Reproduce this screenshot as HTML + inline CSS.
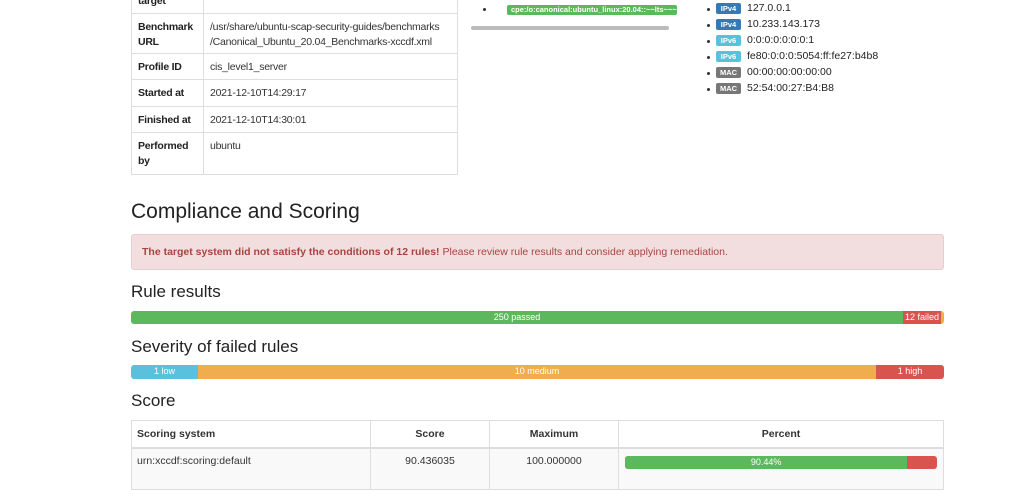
<!DOCTYPE html>
<html><head><meta charset="utf-8"><style>
*{margin:0;padding:0;box-sizing:border-box}
body{width:1024px;height:500px;overflow:hidden;background:#fff;font-family:"Liberation Sans",sans-serif;color:#333;position:relative}
.a{position:absolute}
table{border-collapse:collapse}
.t1{position:absolute;left:131px;top:-28px;width:326px;font-size:10.5px;letter-spacing:-0.25px;table-layout:fixed}
.t1 td{border:1px solid #ddd;padding:0 6px;vertical-align:top;line-height:15px;white-space:nowrap;overflow:hidden}
.t1 td div{padding-top:6px}
.t1 td:first-child{font-weight:bold;color:#222}
h2{position:absolute;font-weight:normal;color:#222;left:131px}
.lbl{position:absolute;left:716px;width:25px;height:11px;border-radius:2px;color:#fff;font-size:7.5px;font-weight:bold;text-align:center;line-height:11px}
.ipt{position:absolute;left:747px;font-size:10.5px;color:#222}
.dot{position:absolute;left:707px;width:3px;height:3px;border-radius:2px;background:#333}
.bar{position:absolute;color:#fff;font-size:9px;text-align:center;line-height:13px;height:13px}
</style></head><body>
<table class="t1">
<colgroup><col style="width:72px"><col style="width:254px"></colgroup>
<tr style="height:41px"><td><div style="padding-top:21px">target</div></td><td></td></tr>
<tr style="height:40px"><td><div>Benchmark<br>URL</div></td><td><div>/usr/share/ubuntu-scap-security-guides/benchmarks<br>/Canonical_Ubuntu_20.04_Benchmarks-xccdf.xml</div></td></tr>
<tr style="height:26px"><td><div>Profile ID</div></td><td><div>cis_level1_server</div></td></tr>
<tr style="height:27px"><td><div>Started at</div></td><td><div>2021-12-10T14:29:17</div></td></tr>
<tr style="height:26px"><td><div>Finished at</div></td><td><div>2021-12-10T14:30:01</div></td></tr>
<tr style="height:42px"><td><div>Performed<br>by</div></td><td><div>ubuntu</div></td></tr>
</table>

<div class="a" style="left:483px;top:8px;width:3px;height:3px;border-radius:2px;background:#333"></div>
<div class="a" style="left:507px;top:5px;width:170px;height:10px;background:#5cb85c;border-radius:2px;color:#fff;font-size:7.5px;font-weight:bold;line-height:10px;padding-left:4px;white-space:nowrap;overflow:hidden">cpe:/o:canonical:ubuntu_linux:20.04::~~lts~~~</div>
<div class="a" style="left:471px;top:26px;width:198px;height:4px;background:#bbb;border-radius:2px"></div>

<div class="dot" style="top:8px"></div><div class="lbl" style="top:3px;background:#337ab7">IPv4</div><div class="ipt" style="top:2px">127.0.0.1</div>
<div class="dot" style="top:24px"></div><div class="lbl" style="top:19px;background:#337ab7">IPv4</div><div class="ipt" style="top:18px">10.233.143.173</div>
<div class="dot" style="top:40px"></div><div class="lbl" style="top:35px;background:#5bc0de">IPv6</div><div class="ipt" style="top:34px">0:0:0:0:0:0:0:1</div>
<div class="dot" style="top:56px"></div><div class="lbl" style="top:51px;background:#5bc0de">IPv6</div><div class="ipt" style="top:50px">fe80:0:0:0:5054:ff:fe27:b4b8</div>
<div class="dot" style="top:72px"></div><div class="lbl" style="top:67px;background:#777">MAC</div><div class="ipt" style="top:66px">00:00:00:00:00:00</div>
<div class="dot" style="top:88px"></div><div class="lbl" style="top:83px;background:#777">MAC</div><div class="ipt" style="top:82px">52:54:00:27:B4:B8</div>

<h2 style="top:200px;font-size:21px">Compliance and Scoring</h2>
<div class="a" style="left:131px;top:234px;width:813px;height:36px;background:#f2dede;border:1px solid #ebccd1;border-radius:3px;color:#a94442;font-size:10.5px;line-height:34px;padding-left:10px"><b>The target system did not satisfy the conditions of 12 rules!</b> Please review rule results and consider applying remediation.</div>

<h2 style="top:282px;font-size:17px">Rule results</h2>
<div class="a" style="left:131px;top:311px;width:813px;height:13px;border-radius:3px;overflow:hidden">
<div class="bar" style="left:0;width:772px;background:#5cb85c;position:absolute">250 passed</div>
<div class="bar" style="left:772px;width:38px;background:#d9534f;position:absolute">12 failed</div>
<div class="bar" style="left:810px;width:3px;background:#f0ad4e;position:absolute"></div>
</div>

<h2 style="top:337px;font-size:17px">Severity of failed rules</h2>
<div class="a" style="left:131px;top:365px;width:813px;height:14px;border-radius:3px;overflow:hidden">
<div class="bar" style="left:0;width:67px;background:#5bc0de;position:absolute;height:14px">1 low</div>
<div class="bar" style="left:67px;width:678px;background:#f0ad4e;position:absolute;height:14px">10 medium</div>
<div class="bar" style="left:745px;width:68px;background:#d9534f;position:absolute;height:14px">1 high</div>
</div>

<h2 style="top:391px;font-size:17px">Score</h2>
<table class="a" style="left:131px;top:420px;width:813px;font-size:10.5px">
<tr style="height:27px"><th style="border:1px solid #ddd;border-bottom:2px solid #ddd;text-align:left;padding-left:5px;width:239px">Scoring system</th><th style="border:1px solid #ddd;border-bottom:2px solid #ddd;width:119px">Score</th><th style="border:1px solid #ddd;border-bottom:2px solid #ddd;width:129px">Maximum</th><th style="border:1px solid #ddd;border-bottom:2px solid #ddd">Percent</th></tr>
<tr style="height:42px;background:#f9f9f9"><td style="border:1px solid #ddd;vertical-align:top;padding:6px 5px">urn:xccdf:scoring:default</td><td style="border:1px solid #ddd;vertical-align:top;padding-top:6px;text-align:center">90.436035</td><td style="border:1px solid #ddd;vertical-align:top;padding-top:6px;text-align:center">100.000000</td><td style="border:1px solid #ddd;vertical-align:top;padding:7px 6px">
<div style="height:13px;background:#d9534f;border-radius:3px;overflow:hidden"><div style="width:90.44%;height:13px;background:#5cb85c;color:#fff;font-size:9px;text-align:center;line-height:13px">90.44%</div></div></td></tr>
</table>
</body></html>
